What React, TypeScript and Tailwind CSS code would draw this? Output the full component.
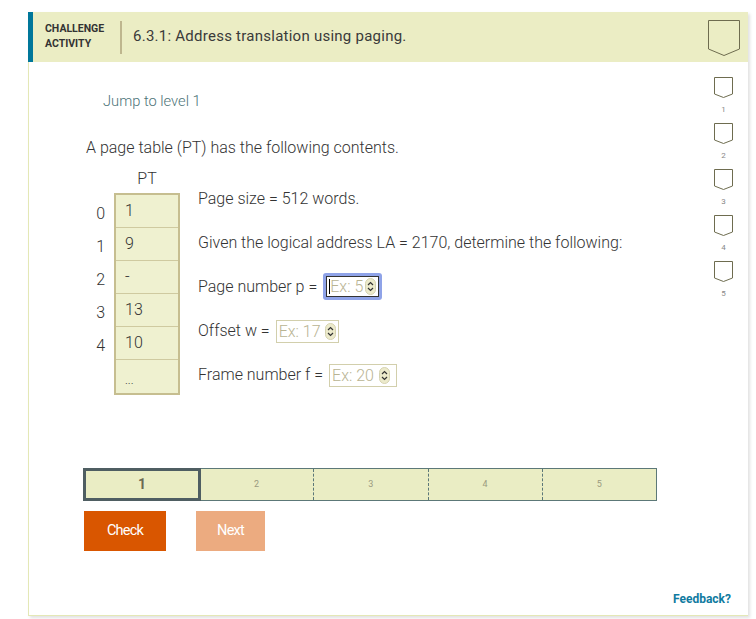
import React from "react";

const Shield = ({ w, h }: { w: number; h: number }) => (
  <svg width={w} height={h} viewBox={`0 0 ${w} ${h}`} fill="none">
    <path
      d={`M0.5 0.5 H${w - 0.5} V${h - 7} L${w / 2} ${h - 0.5} L0.5 ${h - 7} Z`}
      stroke="#6e6c4f"
      strokeWidth="1"
      fill="none"
    />
  </svg>
);

const SmallShield = () => (
  <svg width="19" height="21" viewBox="0 0 19 21" fill="none">
    <path d="M0.5 0.5 H18.5 V17 L9.5 20.5 L0.5 17 Z" stroke="#6e6c4f" strokeWidth="1" fill="white" />
  </svg>
);

const Spinner = () => (
  <svg width="11" height="17" viewBox="0 0 11 17">
    <rect x="0.5" y="0.5" width="10" height="16" rx="5" fill="#eceacb" stroke="#d5d2b0" />
    <path d="M3 7 L5.5 4.5 L8 7" stroke="#333" strokeWidth="1.2" fill="none" />
    <path d="M3 10 L5.5 12.5 L8 10" stroke="#333" strokeWidth="1.2" fill="none" />
  </svg>
);

export default function App() {
  const rows = ["1", "9", "-", "13", "10", "..."];
  return (
    <div
      className="w-[756px] h-[619px] bg-white overflow-hidden pt-[12px] pl-[28px]"
      style={{ fontFamily: "Roboto, 'Liberation Sans', sans-serif" }}
    >
      <div className="relative w-[720px] h-[604px] bg-white border-l border-b border-[#e4e8b6] shadow-[2px_2px_3px_rgba(0,0,0,0.12)]">
        {/* Header */}
        <div className="h-[50px] bg-[#ebedc4] border-l-[5px] border-[#00779a] flex items-center -ml-px">
          <div className="pl-[12px] w-[87px] -mt-[2px] text-[10.5px] font-bold leading-[15px] text-[#333]">
            <div>CHALLENGE</div>
            <div>ACTIVITY</div>
          </div>
          <div className="w-[2px] h-[33px] bg-[#beb68e]" />
          <div className="ml-[11px] -mt-[2px] text-[15px] text-[#3a3a3a] tracking-[0.25px]">
            6.3.1: Address translation using paging.
          </div>
          <div className="ml-auto mr-[8px] mt-[1px]">
            <Shield w={32} h={36} />
          </div>
        </div>

        {/* Side levels */}
        <div className="absolute right-[15px] top-[65px] flex flex-col items-center">
          {[1, 2, 3, 4, 5].map((n) => (
            <div key={n} className="flex flex-col items-center h-[46px]">
              <SmallShield />
              <div className="text-[8px] text-[#888] leading-[10px] mt-[7px]">{n}</div>
            </div>
          ))}
        </div>

        {/* Body */}
        <div className="pl-[55px] font-light">
          <div className="mt-[30px] ml-[19px] text-[14.7px] text-[#4d7478] leading-[18px]">Jump to level 1</div>
          <div className="mt-[28px] ml-[2px] text-[16px] text-[#333] leading-[20px]">
            A page table (PT) has the following contents.
          </div>

          <div className="flex mt-[12px] text-[16px]">
            {/* index column */}
            <div className="flex flex-col pt-[27px] w-[30px] items-end pr-[9px] text-[#333]">
              {rows.map((r, i) => (
                <div key={i} className="h-[33px] flex items-center">
                  {i < 5 ? i : ""}
                </div>
              ))}
            </div>
            {/* table */}
            <div className="flex flex-col">
              <div className="text-[#333] text-center h-[23px] leading-[18px]">PT</div>
              <div className="w-[66px] border-2 border-[#c6be90] bg-[#eff1d0]">
                {rows.map((r, i) => (
                  <div
                    key={i}
                    className={`h-[33px] flex items-center pl-[9px] text-[#333] ${
                      i < 5 ? "border-b border-[#cfcaa0]" : ""
                    } ${i === 5 ? "text-[12px] pt-[6px]" : ""}`}
                  >
                    {r}
                  </div>
                ))}
              </div>
            </div>
            {/* right column */}
            <div className="ml-[18px] pt-[19px] flex flex-col text-[#333]">
              <div className="h-[44px] leading-[20px]">Page size = 512 words.</div>
              <div className="h-[44px] leading-[20px]">Given the logical address LA = 2170, determine the following:</div>
              <div className="h-[44px] flex items-start">
                <span className="leading-[20px]">Page number p =</span>
                <div className="ml-[6px] -mt-[4px] rounded-[3px] bg-[#8fa3e8] p-[3px]">
                  <div className="w-[53px] h-[21px] bg-white border border-[#333] flex items-center pl-[2px]">
                    <div className="w-px h-[15px] bg-[#000]" />
                    <span className="text-[#b9b493] leading-[18px]">Ex: 5</span>
                    <div className="ml-[2px]">
                      <Spinner />
                    </div>
                  </div>
                </div>
              </div>
              <div className="h-[44px] flex items-start">
                <span className="leading-[20px]">Offset w =</span>
                <div className="ml-[6px] -mt-[1px] w-[63px] h-[23px] border border-[#d2cfac] bg-white flex items-center pl-[2px]">
                  <span className="text-[#b9b493] leading-[18px]">Ex: 17</span>
                  <div className="ml-[4px]">
                    <Spinner />
                  </div>
                </div>
              </div>
              <div className="h-[44px] flex items-start">
                <span className="leading-[20px]">Frame number f =</span>
                <div className="ml-[6px] -mt-[1px] w-[68px] h-[23px] border border-[#d2cfac] bg-white flex items-center pl-[2px]">
                  <span className="text-[#b9b493] leading-[18px]">Ex: 20</span>
                  <div className="ml-auto mr-[6px]">
                    <Spinner />
                  </div>
                </div>
              </div>
            </div>
          </div>
        </div>

        {/* Progress bar */}
        <div className="ml-[54px] mt-[59px] w-[574px] h-[33px] flex bg-[#eaedc4] border border-[#5c7878]">
          <div className="-m-px w-[118px] h-[33px] border-[3px] border-[#4f5e62] flex items-center justify-center text-[14px] font-bold text-[#6b6a52]">
            1
          </div>
          {[2, 3, 4, 5].map((n) => (
            <div
              key={n}
              className={`flex-1 flex items-center justify-center text-[9px] text-[#9a9a80] ${
                n > 2 ? "border-l border-dashed border-[#5c7878]" : ""
              }`}
            >
              {n}
            </div>
          ))}
        </div>

        {/* Buttons */}
        <div className="ml-[55px] mt-[10px] flex gap-[30px]">
          <div className="w-[82px] h-[40px] bg-[#d95600] text-white text-[14.5px] flex items-center justify-center tracking-[-0.8px]">
            Check
          </div>
          <div className="w-[69px] h-[40px] bg-[#ecab80] text-white text-[14.5px] flex items-center justify-center tracking-[-0.8px]">
            Next
          </div>
        </div>

        <div className="absolute right-[17px] bottom-[7px] text-[12px] font-bold text-[#0f7aa0]">Feedback?</div>
      </div>
    </div>
  );
}
